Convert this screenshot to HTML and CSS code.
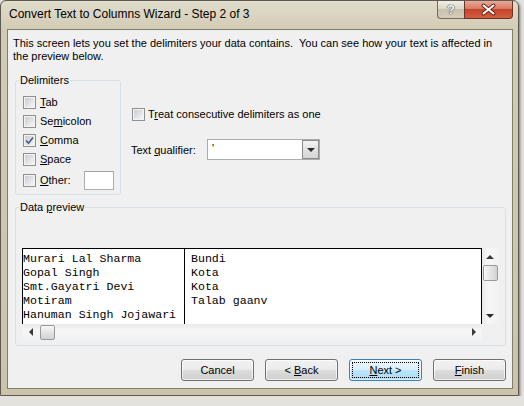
FILE: index.html
```html
<!DOCTYPE html>
<html>
<head>
<meta charset="utf-8">
<link rel="stylesheet" href="styles.css">
</head>
<body>
<div class="window">
  <div class="titlebar">
    <span class="title">Convert Text to Columns Wizard - Step 2 of 3</span>
    <div class="caption">
      <div class="cb help">?</div>
      <div class="cb close">
        <svg width="49" height="17" viewBox="0 0 49 17">
          <path d="M19.5 4.5 L29.5 12.5 M29.5 4.5 L19.5 12.5" stroke="#6b2418" stroke-width="4" stroke-linecap="round" fill="none"/>
          <path d="M19.5 4.5 L29.5 12.5 M29.5 4.5 L19.5 12.5" stroke="#ffffff" stroke-width="2" stroke-linecap="round" fill="none"/>
        </svg>
      </div>
    </div>
  </div>
  <div class="client">
    <p class="intro">This screen lets you set the delimiters your data contains.&nbsp; You can see how your text is affected in the preview below.</p>
    <div class="options">
      <fieldset class="group delims">
        <legend>Delimiters</legend>
        <div class="gbody">
          <div class="check-row"><span class="box"></span><span><u>T</u>ab</span></div>
          <div class="check-row"><span class="box"></span><span>Se<u>m</u>icolon</span></div>
          <div class="check-row"><span class="box checked"><svg width="11" height="11" viewBox="0 0 11 11"><path d="M2 5.5 L4.5 8.2 L9 2.5" stroke="#4a5e8c" stroke-width="1.7" fill="none"/></svg></span><span><u>C</u>omma</span></div>
          <div class="check-row"><span class="box"></span><span><u>S</u>pace</span></div>
          <div class="check-row other"><span class="box"></span><span class="lbl"><u>O</u>ther:</span><span class="textbox"></span></div>
        </div>
      </fieldset>
      <div class="side">
        <div class="check-row treat"><span class="box"></span><span>T<u>r</u>eat consecutive delimiters as one</span></div>
        <div class="qual">
          <span class="lbl">Text <u>q</u>ualifier:</span>
          <div class="combo">
            <span class="combo-val">'</span>
            <span class="combo-btn"><span class="tri down"></span></span>
          </div>
        </div>
      </div>
    </div>
    <fieldset class="group preview-group">
      <legend>Data <u>p</u>review</legend>
      <div class="gbody">
        <div class="preview">
          <div class="grid-area">
            <div class="sheet">
              <div class="col c1">Murari Lal Sharma
Gopal Singh
Smt.Gayatri Devi
Motiram
Hanuman Singh Jojawari</div>
              <div class="col c2">Bundi
Kota
Kota
Talab gaanv</div>
            </div>
            <div class="vscroll">
              <div class="arr v-up"><span class="tri up"></span></div>
              <div class="thumb vthumb"></div>
              <div class="track"></div>
              <div class="arr v-down"><span class="tri down"></span></div>
            </div>
          </div>
          <div class="hrow">
            <div class="hscroll">
              <div class="arr h-left"><span class="tri left"></span></div>
              <div class="thumb hthumb"></div>
              <div class="track"></div>
              <div class="arr h-right"><span class="tri right"></span></div>
            </div>
            <div class="corner"></div>
          </div>
        </div>
      </div>
    </fieldset>
    <div class="buttons">
      <div class="btn"><span>Cancel</span></div>
      <div class="btn"><span>&lt; <u>B</u>ack</span></div>
      <div class="btn default"><span><u>N</u>ext &gt;</span></div>
      <div class="btn"><span><u>F</u>inish</span></div>
    </div>
  </div>
</div>
</body>
</html>
```

FILE: styles.css
```css
body {
  margin: 0;
  background: #e3e2dd;
  font-family: "Liberation Sans", Arial, sans-serif;
  font-size: 11px;
  color: #000;
}

.window {
  width: 517px;
  height: 394px;
  border: 1px solid #5d5a50;
  border-radius: 6px 6px 0 0;
  background: linear-gradient(#e2ddcc, #d2cbb5 28px, #cbc4ab);
  box-shadow: 1px 2px 3px rgba(0, 0, 0, 0.5);
  display: flex;
  flex-direction: column;
}

.titlebar {
  height: 28px;
  display: flex;
  align-items: flex-start;
}

.title {
  flex: 1;
  padding: 6px 0 0 8px;
  font-size: 12px;
  line-height: 14px;
}

.caption {
  display: flex;
  margin-right: 5px;
}

.cb {
  height: 18px;
  box-sizing: border-box;
  border: 1px solid #6f6a5d;
  border-top: 0;
}

.help {
  width: 27px;
  border-right: 0;
  border-radius: 0 0 0 4px;
  background: linear-gradient(#f0eee6, #dcd7c8 45%, #c8c1ac 50%, #d3cdba);
  color: #f4f4f4;
  font-weight: bold;
  font-size: 13px;
  line-height: 17px;
  text-align: center;
  text-shadow: 0 0 1px #555, 0 0 1px #555, 0 0 1px #555;
}

.close {
  width: 49px;
  border-color: #6a3326;
  border-radius: 0 0 4px 0;
  background: linear-gradient(#eaa999, #d87a64 45%, #c5452c 50%, #d45e40);
}

.close svg {
  display: block;
  margin-left: -1px;
}

.client {
  margin: 0 5px 6px 6px;
  border: 1px solid #837d6b;
  background: #f0f0f0;
  padding: 0 6px 7px 5px;
}

.intro {
  margin: 7px 0 0;
  line-height: 13px;
}

.options {
  display: flex;
  align-items: flex-start;
  margin: 11px 0 0 2px;
}

fieldset.group {
  margin: 0;
  padding: 0;
  border: 1px solid #d5dfe5;
  border-radius: 3px;
  min-width: 0;
  box-sizing: border-box;
}

fieldset.group legend {
  margin-left: 3px;
  padding: 0 1px;
  line-height: 13px;
}

fieldset.delims {
  width: 106px;
}

.delims .gbody {
  padding: 6px 0 3px 7px;
}

.check-row {
  display: flex;
  align-items: center;
  height: 19px;
  line-height: 13px;
}

.box {
  width: 13px;
  height: 13px;
  box-sizing: border-box;
  border: 1px solid #8e8f8f;
  background: linear-gradient(135deg, #c3c7cd 0%, #e6e7e9 60%, #f7f7f7 100%);
  box-shadow: inset 0 0 0 1px #f4f4f4;
  margin-right: 4px;
  flex: none;
  display: flex;
  align-items: center;
  justify-content: center;
}

.box svg {
  display: block;
}

.other {
  height: 22px;
}

.other .lbl {
  width: 44px;
}

.textbox {
  width: 30px;
  height: 19px;
  box-sizing: border-box;
  border: 1px solid #abadb3;
  border-top-color: #a0a2a8;
  background: #fff;
}

.side {
  margin-left: 10px;
}

.treat {
  margin-top: 31px;
  padding-left: 1px;
}

.treat .box {
  margin-right: 3px;
}

.qual {
  display: flex;
  align-items: center;
  margin-top: 15px;
}

.qual .lbl {
  width: 76px;
}

.combo {
  width: 113px;
  height: 21px;
  box-sizing: border-box;
  border: 1px solid #acacac;
  background: #fff;
  display: flex;
}

.combo-val {
  flex: 1;
  padding-left: 4px;
  line-height: 16px;
}

.combo-btn {
  width: 17px;
  box-sizing: border-box;
  border: 1px solid #8a8a8a;
  background: linear-gradient(#f4f4f4, #e2e2e2 50%, #d6d6d6);
  display: flex;
  align-items: center;
  justify-content: center;
}

.tri {
  width: 0;
  height: 0;
  display: block;
}

.tri.down {
  border-left: 4px solid transparent;
  border-right: 4px solid transparent;
  border-top: 4px solid #2b2b2b;
}

.tri.up {
  border-left: 4px solid transparent;
  border-right: 4px solid transparent;
  border-bottom: 4px solid #3a3a3a;
}

.tri.left {
  border-top: 4px solid transparent;
  border-bottom: 4px solid transparent;
  border-right: 4px solid #3a3a3a;
}

.tri.right {
  border-top: 4px solid transparent;
  border-bottom: 4px solid transparent;
  border-left: 4px solid #3a3a3a;
}

fieldset.preview-group {
  margin: 6px 0 0 2px;
  width: 491px;
}

.preview-group .gbody {
  padding: 34px 0 5px 6px;
}

.preview {
  width: 476px;
}

.grid-area {
  display: flex;
  height: 76px;
}

.sheet {
  width: 460px;
  box-sizing: border-box;
  border: 1px solid #000;
  border-bottom: 0;
  background: #fff;
  display: flex;
  font-family: "Liberation Mono", "Courier New", monospace;
  font-size: 11.6px;
  line-height: 14px;
}

.col {
  padding-top: 3px;
  white-space: pre;
}

.c1 {
  width: 161px;
  border-right: 1px solid #000;
}

.c2 {
  padding-left: 6px;
}

.vscroll {
  width: 16px;
  display: flex;
  flex-direction: column;
  background: linear-gradient(90deg, #eaeaea, #f6f6f6 40%, #f2f2f2);
}

.arr {
  display: flex;
  align-items: center;
  justify-content: center;
  flex: none;
}

.v-up {
  height: 17px;
}

.v-down {
  height: 16px;
}

.track {
  flex: 1;
}

.thumb {
  box-sizing: border-box;
  border: 1px solid #9a9a9a;
  border-radius: 2px;
  flex: none;
}

.vthumb {
  width: 15px;
  height: 16px;
  margin-left: 1px;
  background: linear-gradient(90deg, #f7f7f7, #e4e4e4 50%, #d2d2d2);
}

.hrow {
  display: flex;
  height: 16px;
}

.hscroll {
  width: 460px;
  display: flex;
  background: linear-gradient(#eaeaea, #f6f6f6 40%, #f2f2f2);
}

.h-left {
  width: 18px;
}

.h-right {
  width: 16px;
}

.hthumb {
  width: 15px;
  height: 15px;
  margin-top: 1px;
  background: linear-gradient(#f7f7f7, #e4e4e4 50%, #d2d2d2);
}

.corner {
  width: 16px;
  background: #f0f0f0;
}

.buttons {
  display: flex;
  justify-content: flex-end;
  gap: 11px;
  margin-top: 13px;
}

.btn {
  width: 73px;
  height: 22px;
  box-sizing: border-box;
  border: 1px solid #707070;
  border-radius: 3px;
  background: linear-gradient(#f2f2f2 0%, #ebebeb 50%, #dddddd 50%, #cfcfcf 100%);
  box-shadow: inset 0 0 0 1px rgba(255, 255, 255, 0.7);
  display: flex;
  align-items: center;
  justify-content: center;
  position: relative;
}

.btn.default {
  border-color: #3c7fb1;
  background: linear-gradient(#eaf6fd 0%, #d9f0fc 50%, #bee6fd 50%, #a7d9f5 100%);
}

.btn.default::after {
  content: "";
  position: absolute;
  left: 2px;
  top: 2px;
  right: 2px;
  bottom: 2px;
  border: 1px dotted #000;
}

u {
  text-underline-offset: 1px;
}
```
